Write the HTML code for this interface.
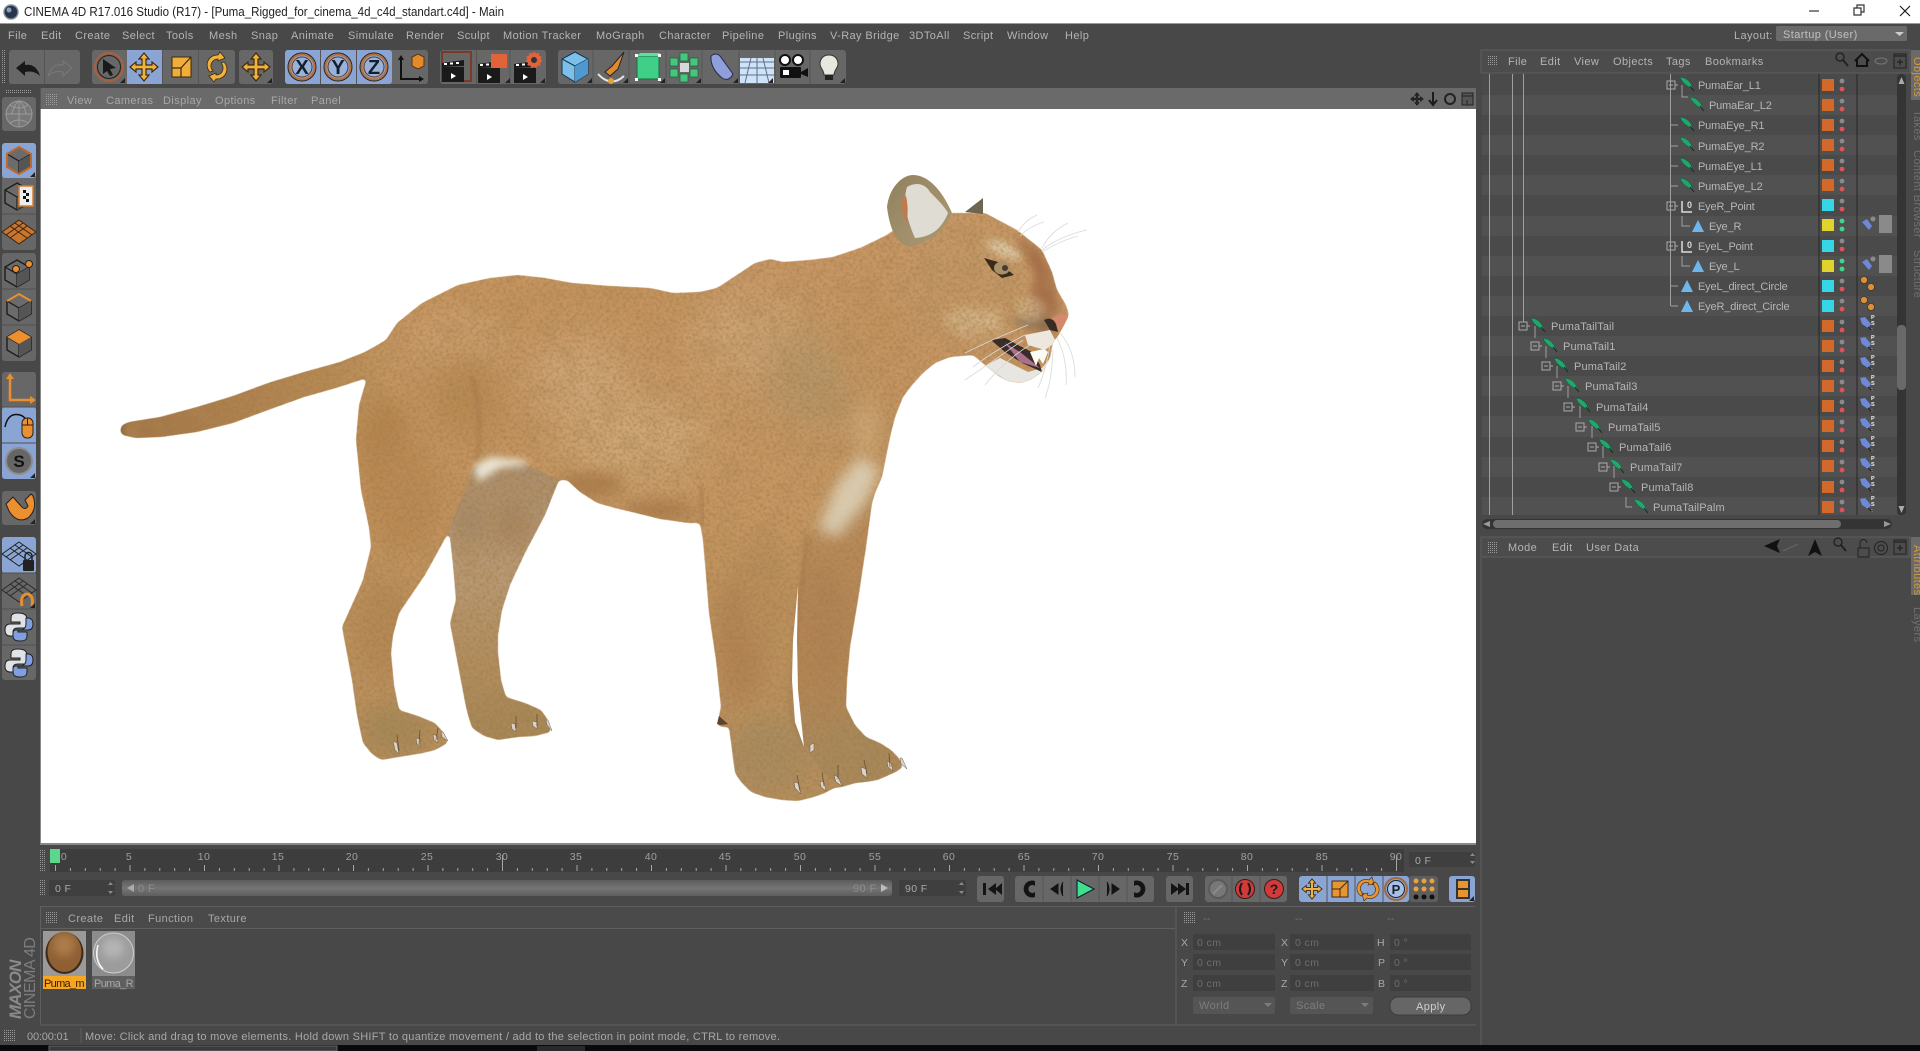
<!DOCTYPE html>
<html lang="en"><head><meta charset="utf-8"><title>CINEMA 4D R17.016 Studio</title>
<style>
html,body{margin:0;padding:0;background:#000;width:1920px;height:1051px;overflow:hidden}
svg{display:block;position:absolute;left:0;top:0}
text{font-family:"Liberation Sans",sans-serif;font-size:11px;letter-spacing:.4px;fill:#b0b0b0}
.m{fill:#b4b4b4}
.h{fill:#a8a8a8}
.t{font-size:11px;letter-spacing:.12px;fill:#b6b6b6}
.t0{font-size:11px;letter-spacing:-.15px;fill:#b6b6b6}
.d{fill:#6d6d6d;font-size:10.5px}
.l{fill:#a9a9a9;font-size:10.5px}
.s{fill:#787878;font-size:10.5px}
.r{fill:#a0a0a0;font-size:10.5px;text-anchor:middle}
.tab{font-size:11px;fill:#707070}
</style></head><body>
<svg width="1920" height="1051" viewBox="0 0 1920 1051" xmlns="http://www.w3.org/2000/svg">
<defs>
<pattern id="gr" width="2" height="2" patternUnits="userSpaceOnUse"><rect width="1" height="1" fill="#9a9a9a"/></pattern>
<linearGradient id="sl" x1="0" y1="0" x2="0" y2="1"><stop offset="0" stop-color="#5c5c5c"/><stop offset=".5" stop-color="#757575"/><stop offset="1" stop-color="#5e5e5e"/></linearGradient>
<linearGradient id="body" x1="0" y1="0" x2="0" y2="1"><stop offset="0" stop-color="#c99868"/><stop offset=".5" stop-color="#c49560"/><stop offset="1" stop-color="#b58e5e"/></linearGradient>
<linearGradient id="farh" x1="0" y1="0" x2="0" y2="1"><stop offset="0" stop-color="#a98d6d"/><stop offset=".4" stop-color="#b89a76"/><stop offset=".7" stop-color="#b28f60"/><stop offset="1" stop-color="#a78757"/></linearGradient>
<linearGradient id="farf" x1="0" y1="0" x2="0" y2="1"><stop offset="0" stop-color="#bb8c5c"/><stop offset=".6" stop-color="#b48655"/><stop offset="1" stop-color="#a6895d"/></linearGradient>
<linearGradient id="tail" x1="0" y1="0" x2="1" y2="0"><stop offset="0" stop-color="#553624"/><stop offset=".06" stop-color="#a47648"/><stop offset=".75" stop-color="#b78a54"/><stop offset="1" stop-color="#c69864"/></linearGradient>
<linearGradient id="earg" x1="0" y1="0" x2="1" y2="1"><stop offset="0" stop-color="#90815f"/><stop offset="1" stop-color="#ad9a72"/></linearGradient>
<filter id="b2" x="-50%" y="-50%" width="200%" height="200%"><feGaussianBlur stdDeviation="2"/></filter>
<filter id="b4" x="-50%" y="-50%" width="200%" height="200%"><feGaussianBlur stdDeviation="4"/></filter>
<filter id="b7" x="-60%" y="-60%" width="220%" height="220%"><feGaussianBlur stdDeviation="7"/></filter>
<filter id="b10" x="-60%" y="-60%" width="220%" height="220%"><feGaussianBlur stdDeviation="11"/></filter>
<filter id="b20" x="-60%" y="-60%" width="220%" height="220%"><feGaussianBlur stdDeviation="20"/></filter>
<filter id="fur" x="0" y="0" width="100%" height="100%"><feTurbulence type="fractalNoise" baseFrequency=".3" numOctaves="3" seed="7"/><feColorMatrix values="0 0 0 0 .34  0 0 0 0 .19  0 0 0 0 .06  2.4 0 0 0 -.95"/></filter>
<filter id="mot" x="0" y="0" width="100%" height="100%"><feTurbulence type="fractalNoise" baseFrequency=".05" numOctaves="3" seed="12"/><feColorMatrix values="0 0 0 0 .45  0 0 0 0 .26  0 0 0 0 .1  3 0 0 0 -1.2"/></filter>
<filter id="goo" filterUnits="userSpaceOnUse" x="0" y="0" width="1920" height="1051"><feGaussianBlur stdDeviation="2.200"/><feComponentTransfer><feFuncA type="linear" slope="5" intercept="-2"/></feComponentTransfer></filter>
<path id="silp" d="M120 430L122 425 129 422 160 417 197 407 233 396 268 383 304 372 340 362 365 352 386 340 397 323 422 303 458 285 490 278 518 275 545 278 572 283 610 286 650 288 673 293 700 292 717 288 740 273 755 263 770 259 783 262 810 260 833 257 860 248 887 235 905 222 950 213 985 213 1017 230 1042 250 1052 272 1057 290 1066 305 1069 315 1063 327 1058 336 1053 342 1050 358 1042 372 1030 380 1020 383 1008 381 1000 377 985 365 973 355 950 357 935 363 923 373 912 385 903 397 895 417 890 437 886 457 882 477 875 493 872 503 866 547 858 600 850 647 847 680 846 707 855 725 866 737 880 743 891 750 899 758 903 767 896 772 889 775 878 780 866 782 855 783 842 787 834 788 825 793 814 797 798 801 782 800 765 797 751 792 741 782 735 773 732 750 729 727 722 727 717 725 719 716 721 707 716 660 709 613 706 575 703 540 700 523 688 523 660 519 636 513 615 508 597 503 580 492 567 480 559 480 545 515 525 553 510 585 502 610 498 635 498 653 501 680 506 697 525 703 541 710 548 720 551 732 535 736 518 737 498 740 484 736 472 728 468 715 466 707 458 665 450 623 456 600 453 565 450 537 448 533 425 575 399 613 393 635 391 653 394 685 399 710 418 716 435 723 444 733 448 743 435 750 423 753 399 757 381 760 372 754 363 743 357 715 352 680 342 627 352 605 363 580 371 547 369 527 361 490 356 440 359 405 367 378 336 388 304 397 268 410 233 423 197 432 161 437 136 438 122 435Z"/>
<mask id="silm" maskUnits="userSpaceOnUse" x="0" y="0" width="1920" height="1051"><use href="#silp" fill="#fff" filter="url(#goo)"/></mask>
<g id="mv"><path d="M0-14l5 6h-3v6h6v-3l6 5-6 5v-3h-6v6h3l-5 6-5-6h3v-6h-6v3l-6-5 6-5v3h6v-6h-3z" fill="#f0b23c" stroke="#3a2a10" stroke-width="1.2"/></g>
<g id="leaf"><path d="M-7-7Q3-6 6 5L2 3Q-5-1-7-7Z" fill="#1fa76c" stroke="#0f5a3c" stroke-width=".5"/><path d="M3 2L7 7" stroke="#222" stroke-width="1"/></g>
<g id="col"><rect x="-4" y="-4" width="8" height="8" fill="none" stroke="#aaa"/><path d="M-2 0H2M4 0H7" stroke="#aaa"/></g>
<g id="cube"><path d="M0-13L12-6V7L0 14-12 7V-6Z" fill="#6b6b6b" stroke="#1c1c1c" stroke-width="1.4"/><path d="M-12-6L0 1 12-6M0 1V14" fill="none" stroke="#1c1c1c" stroke-width="1.2"/><path d="M0 1L12-6V7L0 14Z" fill="#555"/></g>
<g id="tip"><path d="M0 0h-5l5-5z" fill="#222"/></g>
<g id="pin"><path d="M-6-6L-1-7 5 0 2 4-4 0Z" fill="#6f89d8"/><path d="M2 3L6 7" stroke="#222" stroke-width="1"/><text x="5" y="-5" style="font-size:5.5px;font-weight:700;letter-spacing:0;fill:#eee">P</text><text x="5" y="1" style="font-size:5.5px;font-weight:700;letter-spacing:0;fill:#eee">S</text><text x="5" y="7" style="font-size:5.5px;font-weight:700;letter-spacing:0;fill:#ccc">:</text></g>
<g id="py"><path d="M-1-14C-8-14-8-11-8-8V-5H1V-3H-9C-13-3-14 0-14 3-14 7-12 9-9 9H-6V5C-6 2-4 1-1 1H5C7 1 8 0 8-2V-8C8-12 5-14-1-14Z" fill="#dfe3e8" stroke="#222"/><path d="M1 14C8 14 8 11 8 8V5H-1V3H9C13 3 14 0 14-3 14-7 12-9 9-9H7V-3C7 0 5 3 2 3H-3C-5 3-6 4-6 6V8C-6 12-5 14 1 14Z" fill="#7f9fe0" stroke="#222"/></g>
<g id="ring"><circle r="14" fill="#8aa5d4" stroke="#222" stroke-width="1"/><circle r="12.5" fill="none" stroke="#b5703c" stroke-width="2"/><circle r="10" fill="#9ab1da" stroke="#5a3a20"/></g>
<g id="clap"><rect x="-11" y="-3" width="22" height="15" fill="#1a1a1a"/><path d="M-11-7L11-10V-4L-11-3Z" fill="#1a1a1a"/><path d="M-9-6l3 0M-3-6.500l3 0M3-7l3 0" stroke="#fff" stroke-width="2"/><path d="M-2 3L3 6-2 9Z" fill="#fff"/></g>
<g id="pl"><rect x="-6" y="-7" width="12" height="14" fill="none" stroke="#222"/><path d="M-3 1H3M0-2V4M-6-5H6" stroke="#222" stroke-width="1.2"/></g>
<g id="mag"><circle cx="-2" cy="-2" r="4" fill="none" stroke="#222" stroke-width="1.4"/><path d="M1 1L6 7" stroke="#222" stroke-width="2"/></g>
</defs>

<!-- window frame -->
<rect width="1920" height="1051" fill="#484848"/>
<rect width="1920" height="24" fill="#fff"/>
<rect y="23" width="1920" height="1" fill="#9a9a9a"/>
<circle cx="11" cy="12" r="7" fill="#27364e" stroke="#8a8e96" stroke-width="1.4"/><circle cx="9" cy="10" r="2.500" fill="#8da0bd"/>
<text x="24" y="16" textLength="480" lengthAdjust="spacingAndGlyphs" style="font-size:13px;letter-spacing:0;fill:#222">CINEMA 4D R17.016 Studio (R17) - [Puma_Rigged_for_cinema_4d_c4d_standart.c4d] - Main</text>
<path d="M1809 11H1819" stroke="#333" stroke-width="1.2"/><path d="M1854 8h7v7h-7zM1857 8V5h7v7h-3" fill="none" stroke="#333" stroke-width="1.2"/><path d="M1900 6L1910 16M1910 6L1900 16" stroke="#222" stroke-width="1.200"/>

<!-- menu -->
<g class="menu">
<text class="m" x="8" y="39">File</text><text class="m" x="41" y="39">Edit</text><text class="m" x="75" y="39">Create</text><text class="m" x="122" y="39">Select</text><text class="m" x="166" y="39">Tools</text><text class="m" x="209" y="39">Mesh</text><text class="m" x="251" y="39">Snap</text><text class="m" x="291" y="39">Animate</text><text class="m" x="348" y="39">Simulate</text><text class="m" x="406" y="39">Render</text><text class="m" x="457" y="39">Sculpt</text><text class="m" x="503" y="39">Motion Tracker</text><text class="m" x="596" y="39">MoGraph</text><text class="m" x="659" y="39">Character</text><text class="m" x="722" y="39">Pipeline</text><text class="m" x="778" y="39">Plugins</text><text class="m" x="830" y="39">V-Ray Bridge</text><text class="m" x="909" y="39">3DToAll</text><text class="m" x="963" y="39">Script</text><text class="m" x="1007" y="39">Window</text><text class="m" x="1065" y="39">Help</text>
<text class="m" x="1734" y="39">Layout:</text>
</g>
<rect x="1776" y="26" width="131" height="15" rx="2" fill="#6a6a6a"/><text x="1783" y="38" style="fill:#c0c0c0">Startup (User)</text><path d="M1895 32h9l-4.500 4z" fill="#ccc"/>

<!-- toolbar -->
<rect x="1" y="50" width="5" height="34" fill="url(#gr)"/>
<rect x="9" y="50" width="71" height="34" rx="3" fill="#676767"/>
<rect x="92" y="50" width="143" height="34" rx="3" fill="#676767"/><rect x="127" y="50" width="35" height="34" fill="#8aa5d4"/>
<rect x="239" y="50" width="34" height="34" rx="3" fill="#676767"/>
<rect x="285" y="50" width="143" height="34" rx="3" fill="#676767"/><rect x="285" y="50" width="107" height="34" rx="3" fill="#8aa5d4"/>
<rect x="440" y="50" width="106" height="34" rx="3" fill="#676767"/>
<rect x="558" y="50" width="288" height="34" rx="3" fill="#676767"/>
<path d="M44.500 50V84M162.500 50V84M198.500 50V84M320.500 50V84M356.500 50V84M476.500 50V84M510 50V84M593 50V84M629 50V84M666 50V84M702 50V84M739 50V84M775 50V84M810 50V84" stroke="#555"/>
<path d="M16 68L25 61V65Q36 63 40 76 34 70 25 72V76Z" fill="#181818"/>
<path d="M72 68L63 61V65Q52 63 48 76 54 70 63 72V76Z" fill="none" stroke="#797979"/>
<circle cx="109" cy="67" r="14" fill="#676767" stroke="#a8603f" stroke-width="2.200"/><circle cx="109" cy="67" r="11.500" fill="none" stroke="#222"/><path d="M103 59L116 68 110 69 113 75 110 76 107 71 103 74Z" fill="#1a1a1a"/>
<use href="#mv" x="144" y="67"/>
<path d="M172 57H191V77H172Z" fill="#f0ad3a" stroke="#3a2a10"/><path d="M172 68H181V77M181 68L191 57" fill="none" stroke="#3a2a10" stroke-width="1.200"/>
<path d="M210 72A10 10 0 0 1 218 55L220 52 225 58 218 61 218 59A7 7 0 0 0 213 71ZM224 62A10 10 0 0 1 216 79L214 82 209 76 216 73 216 75A7 7 0 0 0 221 63Z" fill="#f0b23c" stroke="#3a2a10" stroke-width=".8"/>
<use href="#mv" x="256" y="67"/>
<use href="#ring" x="302" y="67"/><use href="#ring" x="338" y="67"/><use href="#ring" x="374" y="67"/>
<text x="302" y="74" text-anchor="middle" style="font-size:20px;font-weight:700;fill:#14202e;letter-spacing:0">X</text><text x="338" y="74" text-anchor="middle" style="font-size:20px;font-weight:700;fill:#14202e;letter-spacing:0">Y</text><text x="374" y="74" text-anchor="middle" style="font-size:20px;font-weight:700;fill:#14202e;letter-spacing:0">Z</text>
<path d="M401 58V79H421" fill="none" stroke="#111" stroke-width="2"/><path d="M401 55l-3 5h6zM424 79l-5-3v6z" fill="#111"/><path d="M412 57l6-3 6 3v9l-6 3-6-3z" fill="#e58a2a" stroke="#5a3310"/>
<rect x="442" y="52" width="29" height="29" fill="none" stroke="#7a3a28" stroke-width="2"/><use href="#clap" x="453" y="70"/>
<use href="#clap" x="489" y="71"/><rect x="491" y="54" width="16" height="14" rx="1" fill="#e2633a"/>
<use href="#clap" x="525" y="71"/><circle cx="534" cy="60" r="7" fill="#e2633a" stroke="#e2633a" stroke-dasharray="2 2" stroke-width="2"/><circle cx="534" cy="60" r="3" fill="#333"/>
<path d="M575 52L588 59V74L575 82 562 74V59Z" fill="#7cc0ea" stroke="#143450"/><path d="M562 59L575 66 588 59M575 66V82" fill="none" stroke="#143450"/><path d="M575 66L588 59V74L575 82Z" fill="#4f99ce"/>
<path d="M624 52L612 66 605 72 610 76 618 69Z" fill="#e08a30" stroke="#222"/><path d="M598 74Q611 88 624 76" fill="none" stroke="#e6e6e6" stroke-width="2"/><circle cx="611" cy="81" r="3" fill="#e2a23c"/>
<rect x="637" y="56" width="22" height="23" fill="#3fcf86" stroke="#1f6d47"/><path d="M637 56l3-3h20l-1 3" fill="#5fe09f"/><g fill="#fff"><rect x="635" y="54" width="3" height="3"/><rect x="658" y="54" width="3" height="3"/><rect x="635" y="78" width="3" height="3"/><rect x="658" y="78" width="3" height="3"/></g>
<g fill="#46c67c" stroke="#1f5a3a" stroke-width=".7"><rect x="680" y="53" width="8" height="8"/><rect x="690" y="58" width="8" height="8"/><rect x="670" y="58" width="8" height="8"/><rect x="670" y="69" width="8" height="8"/><rect x="690" y="69" width="8" height="8"/><rect x="680" y="74" width="8" height="8"/></g><rect x="680" y="63" width="9" height="9" fill="#d8d8d8"/>
<path d="M711 56Q716 52 720 56L733 74Q729 82 722 78 710 68 711 56Z" fill="#8f9fdc" stroke="#2a2a4a"/>
<path d="M740 58H774V83H740Z" fill="#cfe3f8"/><path d="M740 62H774M740 68H774M740 75H774M751 58L745 83M763 58L769 83M757 58V83" stroke="#5f6f88" stroke-width="1"/>
<circle cx="785" cy="60" r="5" fill="#fff" stroke="#111" stroke-width="2"/><circle cx="798" cy="60" r="5" fill="#fff" stroke="#111" stroke-width="2"/><rect x="780" y="67" width="21" height="11" rx="1" fill="#111"/><path d="M801 72l7-4v9l-7-3z" fill="#111"/><rect x="783" y="70" width="6" height="5" fill="#fff"/>
<path d="M829 55C835 55 838 59 838 64 838 68 834 70 834 75H824C824 70 820 68 820 64 820 59 823 55 829 55Z" fill="#e8e8e0" stroke="#333"/><rect x="825" y="75" width="8" height="5" fill="#222"/>
<use href="#tip" x="125" y="83"/><use href="#tip" x="272" y="83"/><use href="#tip" x="510" y="83"/><use href="#tip" x="545" y="83"/><use href="#tip" x="592" y="83"/><use href="#tip" x="628" y="83"/><use href="#tip" x="665" y="83"/><use href="#tip" x="701" y="83"/><use href="#tip" x="738" y="83"/><use href="#tip" x="773" y="83"/><use href="#tip" x="845" y="83"/>

<!-- viewport header -->
<rect x="40" y="88" width="1436" height="21" fill="#6a6a6a"/>
<rect x="45" y="93" width="12" height="12" fill="url(#gr)"/>
<text class="h" x="67" y="104">View</text><text class="h" x="106" y="104">Cameras</text><text class="h" x="163" y="104">Display</text><text class="h" x="215" y="104">Options</text><text class="h" x="271" y="104">Filter</text><text class="h" x="311" y="104">Panel</text>
<use href="#mv" transform="translate(1417 99) scale(.45)" style="filter:grayscale(1) brightness(.25)"/><path d="M1433 92V104M1429 100l4 5 4-5" stroke="#1c1c1c" stroke-width="2" fill="none"/><circle cx="1450" cy="99" r="5" fill="none" stroke="#222" stroke-width="2"/><rect x="1462" y="93" width="11" height="12" fill="#555" stroke="#222"/><path d="M1462 96h11M1467 100v5" stroke="#222"/>

<!-- viewport -->
<rect x="40" y="109" width="1436" height="734" fill="#fff"/>
<rect x="40" y="109" width="1" height="734" fill="#8a8a8a"/>
<rect x="40" y="843" width="1436" height="2" fill="#888"/>

<!-- Puma -->
<g mask="url(#silm)">
<rect x="100" y="200" width="980" height="610" fill="url(#body)"/>
<rect x="110" y="320" width="290" height="125" fill="url(#tail)"/>
<polygon points="559,480 545,515 525,553 502,610 498,653 506,697 541,710 551,732 518,737 498,740 472,728 466,707 450,623 456,600 448,533 474,467 520,462" fill="url(#farh)"/>
<ellipse cx="512" cy="525" rx="16" ry="22" fill="#96704c" opacity=".45" filter="url(#b10)"/>
<ellipse cx="470" cy="525" rx="12" ry="22" fill="#8f7658" opacity=".45" filter="url(#b10)"/>
<polygon points="806,535 875,493 872,503 866,547 850,647 846,707 866,737 891,750 903,767 889,775 866,782 842,787 820,770 805,745 797,690 796,620" fill="url(#farf)"/>
<ellipse cx="560" cy="305" rx="150" ry="30" fill="#c5945f" filter="url(#b10)"/>
<ellipse cx="460" cy="345" rx="45" ry="35" fill="#cda070" filter="url(#b10)"/>
<ellipse cx="465" cy="395" rx="35" ry="45" fill="#b78851" filter="url(#b20)"/>
<ellipse cx="385" cy="450" rx="25" ry="55" fill="#b5844e" filter="url(#b10)"/>
<ellipse cx="405" cy="500" rx="35" ry="55" fill="#bb8a54" filter="url(#b10)"/>
<ellipse cx="385" cy="630" rx="30" ry="50" fill="#b68854" filter="url(#b10)"/>
<ellipse cx="395" cy="730" rx="35" ry="25" fill="#a58859" filter="url(#b10)"/>
<ellipse cx="505" cy="722" rx="38" ry="20" fill="#a68759" filter="url(#b10)"/>
<ellipse cx="640" cy="440" rx="80" ry="45" fill="#cda677" filter="url(#b20)"/>
<ellipse cx="580" cy="380" rx="50" ry="40" fill="#cfa678" filter="url(#b20)"/>
<ellipse cx="590" cy="485" rx="34" ry="12" fill="#ac7a4a" filter="url(#b7)"/>
<ellipse cx="660" cy="510" rx="36" ry="9" fill="#ab7c4d" filter="url(#b7)"/>
<ellipse cx="750" cy="340" rx="60" ry="45" fill="#cca374" filter="url(#b20)"/>
<ellipse cx="810" cy="385" rx="40" ry="55" fill="#b6966a" filter="url(#b20)"/>
<ellipse cx="880" cy="330" rx="50" ry="40" fill="#c49461" filter="url(#b20)"/>
<ellipse cx="770" cy="480" rx="70" ry="60" fill="#c69763" filter="url(#b20)"/>
<ellipse cx="740" cy="640" rx="24" ry="65" fill="#b28353" filter="url(#b10)"/>
<ellipse cx="765" cy="590" rx="22" ry="60" fill="#ba8e5c" filter="url(#b10)"/>
<ellipse cx="825" cy="625" rx="18" ry="60" fill="#b08154" filter="url(#b10)"/>
<ellipse cx="770" cy="755" rx="42" ry="36" fill="#a88c60" filter="url(#b10)"/>
<ellipse cx="858" cy="750" rx="30" ry="24" fill="#a5885c" filter="url(#b10)"/>
<!-- creases -->
<path d="M472 375Q484 420 476 462" fill="none" stroke="#9a6c40" stroke-width="4" opacity=".45" filter="url(#b2)"/>
<path d="M700 485Q704 505 702 525" fill="none" stroke="#9a6c40" stroke-width="4" opacity=".5" filter="url(#b2)"/>
<path d="M807 535L795 640 790 712 804 747" fill="none" stroke="#8e6a44" stroke-width="3" opacity=".5" filter="url(#b2)"/>
<!-- head -->
<ellipse cx="965" cy="290" rx="65" ry="60" fill="#c59868" filter="url(#b10)"/>
<ellipse cx="975" cy="322" rx="30" ry="13" fill="#d8bc90" opacity=".8" filter="url(#b7)"/>
<ellipse cx="1005" cy="250" rx="20" ry="7" fill="#dcc6a2" transform="rotate(25 1005 250)" filter="url(#b4)"/>
<polygon points="1015,235 1040,250 1052,272 1060,312 1040,320 1030,300 1035,275" fill="#a86e4c" filter="url(#b4)"/>
<polygon points="1010,318 1048,312 1055,335 1025,328" fill="#8a6a50" filter="url(#b4)"/>
<ellipse cx="1030" cy="310" rx="15" ry="14" fill="#d8c4a0" opacity=".5" filter="url(#b4)"/>
</g>
<rect x="100" y="200" width="980" height="610" filter="url(#mot)" mask="url(#silm)" opacity=".3"/>
<rect x="100" y="200" width="980" height="610" filter="url(#fur)" mask="url(#silm)" opacity=".5"/>
<g mask="url(#silm)">
<polygon points="818,530 838,537 866,503 880,470 860,455 836,485" fill="#ddd3bb" filter="url(#b7)" opacity=".85"/>
<ellipse cx="866" cy="430" rx="12" ry="28" fill="#d3b68c" opacity=".55" filter="url(#b10)"/>
<polygon points="474,466 490,457 525,460 528,465 500,468 478,482" fill="#ece8d8" filter="url(#b4)" opacity=".95"/>
<polygon points="1000,358 1028,372 1042,368 1050,358 1036,385 1010,383 985,366" fill="#e8e6e0"/>
<polygon points="1025,335 1050,330 1056,342 1045,350 1028,345" fill="#ece8e0"/>
<path d="M991 340L1005 338 1018 345 1032 352 1040 365 1042 372 1022 363 1005 352Z" fill="#3a2c28"/>
<path d="M1005 343L1020 352 1040 368 1020 362Z" fill="#a8708a"/>
<path d="M1030 352l6 14 3-8 4 6 5-12-4-3z" fill="#fbfbf6"/>
<path d="M1058 315Q1068 312 1068 318 1066 326 1058 330 1050 325 1049 320Z" fill="#d4886c"/>
<path d="M1044 320Q1052 316 1056 324L1058 332 1050 330Z" fill="#3a2a24"/>
<path d="M984 258L998 262 1014 275 1002 278 992 270Z" fill="#3a2a1c"/>
<ellipse cx="1002" cy="268" rx="8" ry="6.500" fill="#a9916a"/><circle cx="1005" cy="268" r="3" fill="#4a3c2a"/>
</g>
<path d="M798 585L797 640 798 690 804 747 795 722 792 680 793 640Z" fill="#fff"/>
<path d="M728 724l-8 1-3-1 2-8z" fill="#5a4430"/>
<!-- ear -->
<path d="M965 212L983 198 983 214Z" fill="#6e6450"/>
<path d="M887 207C889 188 902 175 913 175 928 175 942 190 952 213 946 230 930 242 910 247 898 245 890 232 887 207Z" fill="url(#earg)"/>
<path d="M907 187C915 182 925 183 930 192 938 200 944 206 948 213 942 228 932 237 915 238 908 222 902 203 907 187Z" fill="#dfdcd4"/>
<path d="M903 197C900 205 902 215 907 222 908 212 908 204 906 196Z" fill="#c07a50"/>
<!-- claws -->
<g fill="#d8d2c8" stroke="#5a4630" stroke-width=".4"><path d="M393 741l4 2 2 11-4-4z"/><path d="M416 738l4 1 0 8-3-3z"/><path d="M433 734l4 2 1 7-4-3z"/><path d="M441 732l2 0 5 9-6-4z"/><path d="M511 723l4 1 1 8-4-3z"/><path d="M532 721l5 1 0 7-4-3z"/><path d="M546 720l2 0 4 11-5-6z"/><path d="M794 782l4 1 3 11-6-6z"/><path d="M820 781l4 1 2 9-5-4z"/><path d="M834 775l4 2 4 9-6-4z"/><path d="M861 767l5 2 1 9-5-4z"/><path d="M887 761l4 2 2 8-5-4z"/><path d="M900 758l2 0 5 11-6-5z"/><path d="M810 745l4-2 0 7-4 3z"/></g>
<g stroke="#5a4026" stroke-width=".9" fill="none" opacity=".7"><path d="M397 735l2 16M420 730l-1 15M438 728l-2 12M516 716l0 12M537 714l0 12M797 775l3 16M822 772l2 14M838 765l0 14M864 760l3 14M889 753l1 14"/></g>
<!-- whiskers -->
<g stroke="#d8d8d8" stroke-width=".8" fill="none"><path d="M1018 232Q1025 220 1037 215M1020 236Q1030 226 1044 222M1042 248Q1050 232 1068 223M1042 250Q1060 236 1087 230M1042 252Q1062 240 1078 236"/><path d="M1028 325Q995 338 965 353M1025 335Q995 350 973 367M1023 340Q995 360 965 380M1030 345Q1005 360 985 385M1060 333Q1075 350 1075 377M1057 338Q1068 360 1066 385M1053 350Q1052 380 1045 398M1050 345Q1046 370 1038 388"/></g>

<!-- timeline -->
<rect x="40" y="845" width="1436" height="181" fill="#484848"/>
<rect x="50" y="849" width="1354" height="23" fill="#3d3d3d"/>
<rect x="40" y="849" width="6" height="23" fill="url(#gr)"/><rect x="40" y="880" width="6" height="16" fill="url(#gr)"/>
<path stroke="#a5a5a5" d="M55.500 865V871M70.400 868V871M85.300 868V871M100.200 868V871M115.100 868V871M130 865V871M144.900 868V871M159.800 868V871M174.700 868V871M189.600 868V871M204.500 865V871M219.400 868V871M234.300 868V871M249.200 868V871M264.100 868V871M279 865V871M293.900 868V871M308.800 868V871M323.700 868V871M338.600 868V871M353.500 865V871M368.400 868V871M383.300 868V871M398.200 868V871M413.100 868V871M428 865V871M442.900 868V871M457.800 868V871M472.700 868V871M487.600 868V871M502.500 855V871M517.400 868V871M532.300 868V871M547.200 868V871M562.100 868V871M577 865V871M591.900 868V871M606.800 868V871M621.700 868V871M636.600 868V871M651.500 865V871M666.400 868V871M681.300 868V871M696.200 868V871M711.100 868V871M726 865V871M740.900 868V871M755.800 868V871M770.700 868V871M785.600 868V871M800.500 865V871M815.400 868V871M830.300 868V871M845.200 868V871M860.100 868V871M875 865V871M889.900 868V871M904.800 868V871M919.700 868V871M934.600 868V871M949.500 865V871M964.400 868V871M979.300 868V871M994.200 868V871M1009.100 868V871M1024 865V871M1038.900 868V871M1053.800 868V871M1068.700 868V871M1083.600 868V871M1098.500 865V871M1113.400 868V871M1128.300 868V871M1143.200 868V871M1158.100 868V871M1173 865V871M1187.900 868V871M1202.800 868V871M1217.700 868V871M1232.600 868V871M1247.500 865V871M1262.400 868V871M1277.300 868V871M1292.200 868V871M1307.100 868V871M1322 865V871M1336.900 868V871M1351.800 868V871M1366.700 868V871M1381.600 868V871M1396.500 855V871"/>
<rect x="50" y="849" width="10" height="14" fill="#5cd68a"/>
<text class="r" x="64" y="860">0</text><text class="r" x="129" y="860">5</text><text class="r" x="204" y="860">10</text><text class="r" x="278" y="860">15</text><text class="r" x="352" y="860">20</text><text class="r" x="427" y="860">25</text><text class="r" x="502" y="860">30</text><text class="r" x="576" y="860">35</text><text class="r" x="651" y="860">40</text><text class="r" x="725" y="860">45</text><text class="r" x="800" y="860">50</text><text class="r" x="875" y="860">55</text><text class="r" x="949" y="860">60</text><text class="r" x="1024" y="860">65</text><text class="r" x="1098" y="860">70</text><text class="r" x="1173" y="860">75</text><text class="r" x="1247" y="860">80</text><text class="r" x="1322" y="860">85</text><text class="r" x="1396" y="860">90</text>
<rect x="1409" y="852" width="66" height="15" fill="#3f3f3f"/><text class="l" x="1415" y="864">0 F</text><path d="M1470 856l2.500-3 2.500 3zM1470 861l2.500 3 2.500-3z" fill="#8a8a8a"/>
<rect x="49" y="880" width="66" height="16" rx="1" fill="#3f3f3f"/><text class="l" x="55" y="892">0 F</text><path d="M108 885l2.500-3 2.500 3zM108 891l2.500 3 2.500-3z" fill="#8a8a8a"/>
<rect x="122" y="880" width="770" height="16" rx="3" fill="url(#sl)"/><path d="M134 884v8l-7-4z" fill="#aaa"/><text x="138" y="892" style="fill:#8d8d8d">0 F</text><text x="853" y="892" style="fill:#8d8d8d">90 F</text><path d="M881 884v8l7-4z" fill="#bbb"/>
<rect x="899" y="880" width="67" height="16" rx="1" fill="#3f3f3f"/><text class="l" x="905" y="892">90 F</text><path d="M959 885l2.500-3 2.500 3zM959 891l2.500 3 2.500-3z" fill="#8a8a8a"/>
<rect x="977" y="876" width="27" height="26" rx="3" fill="#676767"/><rect x="1015" y="876" width="139" height="26" rx="3" fill="#676767"/><rect x="1166" y="876" width="27" height="26" rx="3" fill="#676767"/><rect x="1205" y="876" width="82" height="26" rx="3" fill="#676767"/><rect x="1299" y="876" width="110" height="26" rx="3" fill="#8aa5d4"/><rect x="1409" y="876" width="29" height="26" rx="3" fill="#5e5e5e"/><rect x="1449" y="876" width="26" height="26" rx="3" fill="#8aa5d4"/>
<path d="M1043 876V902M1071 876V902M1099 876V902M1127 876V902M1232 876V902M1260 876V902M1327 876V902M1355 876V902M1383 876V902" stroke="#555"/>
<path d="M983 883h3v12h-3zM996 883v12l-8-6zM1002 883v12l-7-6z" fill="#141414"/>
<path d="M1035 881A8.500 8.500 0 1 0 1035 897V892A4 4 0 1 1 1035 886Z" fill="#141414"/>
<path d="M1058 884v10l-7-5zM1063 882Q1059 889 1063 896" fill="#141414" stroke="#141414"/>
<path d="M1077 880L1094 889 1077 898Z" fill="#3ee08c" stroke="#123" stroke-width="1.200"/>
<path d="M1112 884v10l7-5zM1107 882Q1111 889 1107 896" fill="#141414" stroke="#141414"/>
<path d="M1134 881A8.500 8.500 0 1 1 1134 897V892A4 4 0 1 0 1134 886Z" fill="#141414"/>
<path d="M1171 883v12l8-6zM1178 883v12l8-6zM1186 883h3v12h-3z" fill="#141414"/>
<circle cx="1218" cy="889" r="9" fill="#777" stroke="#5a5a5a" stroke-width="2"/><path d="M1213 894L1222 885" stroke="#8a8a8a" stroke-width="2"/>
<circle cx="1245" cy="889" r="9.500" fill="#d23a3a" stroke="#3a1a1a"/><path d="M1242 883Q1238 889 1242 895M1248 883Q1252 889 1248 895" fill="none" stroke="#1a1a1a" stroke-width="2"/>
<circle cx="1274" cy="889" r="9.500" fill="#d23a3a" stroke="#3a1a1a"/><text x="1274" y="894" text-anchor="middle" style="font-size:14px;font-weight:700;fill:#1a1a1a;letter-spacing:0">?</text>
<use href="#mv" transform="translate(1312 889) scale(.72)"/>
<path d="M1332 881h16v16h-16z" fill="#e8952f" stroke="#3a2a10"/><path d="M1332 889h8v8M1340 889l8-8" fill="none" stroke="#3a2a10"/>
<path d="M1361 896A9 9 0 0 1 1369 880L1372 877 1374 884 1368 885 1369 883A6 6 0 0 0 1364 894ZM1375 882A9 9 0 0 1 1367 898L1364 901 1362 894 1368 893 1367 895A6 6 0 0 0 1372 884Z" fill="#e8952f" stroke="#3a2a10" stroke-width=".6"/>
<circle cx="1396" cy="889" r="11" fill="#8aa5d4" stroke="#a5683a" stroke-width="2"/><circle cx="1396" cy="889" r="8.500" fill="#a8c0e6" stroke="#222"/><text x="1396" y="894" text-anchor="middle" style="font-size:13px;font-weight:700;fill:#14202e;letter-spacing:0">P</text>
<g fill="#e8a040"><circle cx="1416" cy="881" r="2.500"/><circle cx="1424" cy="881" r="2.500"/><circle cx="1432" cy="881" r="2.500"/><circle cx="1416" cy="889" r="2.500"/><circle cx="1424" cy="889" r="2.500"/><circle cx="1432" cy="889" r="2.500"/></g><g fill="#111"><circle cx="1416" cy="897" r="2.500"/><circle cx="1424" cy="897" r="2.500"/><circle cx="1432" cy="897" r="2.500"/></g>
<rect x="1456" y="879" width="14" height="20" fill="#333"/><rect x="1458" y="881" width="10" height="7" fill="#e8952f"/><rect x="1458" y="890" width="10" height="7" fill="#e8952f"/><use href="#tip" x="1474" y="901"/>

<!-- materials panel -->
<path d="M40 906.500H1475" stroke="#5f5f5f"/><rect x="40" y="907" width="1135" height="21" fill="#4a4a4a"/><path d="M40 928.500H1175M1176 907V1024M40 1025H1476M40.500 907V1025" stroke="#5f5f5f"/>
<rect x="46" y="912" width="12" height="12" fill="url(#gr)"/>
<text class="h" x="68" y="922">Create</text><text class="h" x="114" y="922">Edit</text><text class="h" x="148" y="922">Function</text><text class="h" x="208" y="922">Texture</text>
<rect x="43" y="931" width="43" height="45" fill="#9a9a9a"/><ellipse cx="64.500" cy="953" rx="19" ry="21" fill="#3e2818"/><ellipse cx="64.500" cy="952" rx="17" ry="20" fill="#8e6034"/><ellipse cx="64" cy="945" rx="11" ry="11" fill="#ad7c4a" filter="url(#b4)"/>
<rect x="43" y="976" width="43" height="13" fill="#f5a623"/><text x="44" y="987" textLength="41" style="fill:#3a1a00">Puma_m</text>
<rect x="92" y="931" width="43" height="58" fill="#5f5f5f"/><rect x="92" y="931" width="43" height="45" fill="#8c8c8c"/><circle cx="113.500" cy="953" r="20" fill="#9c9c9c" stroke="#cfcfcf"/><path d="M98 945Q94 960 103 969" fill="none" stroke="#fff" stroke-width="1.500"/><ellipse cx="113" cy="948" rx="11" ry="10" fill="#b4b4b4" filter="url(#b4)"/>
<text x="94" y="987" textLength="40" style="fill:#a8a8a8">Puma_R</text>
<text transform="translate(21 1019) rotate(-90)" style="font-size:17px;font-weight:700;font-style:italic;fill:#8a8a8a;letter-spacing:-1px">MAXON</text>
<text transform="translate(35 1019) rotate(-90)" textLength="82" style="font-size:16px;fill:#7d7d7d;letter-spacing:0">CINEMA 4D</text>

<!-- coordinates -->
<rect x="1184" y="912" width="12" height="12" fill="url(#gr)"/>
<text class="s" x="1203" y="922">--</text><text class="s" x="1295" y="922">--</text><text class="s" x="1387" y="922">--</text>
<g fill="#3f3f3f"><rect x="1193" y="934" width="82" height="16"/><rect x="1290" y="934" width="84" height="16"/><rect x="1390" y="934" width="81" height="16"/><rect x="1193" y="954" width="82" height="16"/><rect x="1290" y="954" width="84" height="16"/><rect x="1390" y="954" width="81" height="16"/><rect x="1193" y="975" width="82" height="16"/><rect x="1290" y="975" width="84" height="16"/><rect x="1390" y="975" width="81" height="16"/></g>
<g class="lb"><text class="l" x="1181" y="946">X</text><text class="l" x="1281" y="946">X</text><text class="l" x="1377" y="946">H</text><text class="l" x="1181" y="966">Y</text><text class="l" x="1281" y="966">Y</text><text class="l" x="1378" y="966">P</text><text class="l" x="1181" y="987">Z</text><text class="l" x="1281" y="987">Z</text><text class="l" x="1378" y="987">B</text></g>
<text class="d" x="1197" y="946">0 cm</text><text class="d" x="1295" y="946">0 cm</text><text class="d" x="1394" y="946">0 °</text><text class="d" x="1197" y="966">0 cm</text><text class="d" x="1295" y="966">0 cm</text><text class="d" x="1394" y="966">0 °</text><text class="d" x="1197" y="987">0 cm</text><text class="d" x="1295" y="987">0 cm</text><text class="d" x="1394" y="987">0 °</text>
<rect x="1193" y="997" width="82" height="17" rx="2" fill="#555"/><text x="1199" y="1009" style="fill:#7d7d7d">World</text><path d="M1264 1003h8l-4 4z" fill="#7d7d7d"/>
<rect x="1290" y="997" width="83" height="17" rx="2" fill="#555"/><text x="1296" y="1009" style="fill:#7d7d7d">Scale</text><path d="M1361 1003h8l-4 4z" fill="#7d7d7d"/>
<rect x="1390" y="997" width="81" height="18" rx="8" fill="#666" stroke="#3c3c3c"/><text x="1416" y="1010" style="fill:#cfcfcf">Apply</text>

<!-- status -->
<rect y="1026" width="1476" height="19" fill="#484848"/>
<rect x="3" y="1030" width="12" height="11" fill="url(#gr)"/>
<text x="27" y="1040" textLength="42" style="fill:#a5a5a5">00:00:01</text><path d="M81 1028V1043" stroke="#5e5e5e"/>
<text x="85" y="1040" textLength="695" style="fill:#a8a8a8;letter-spacing:0">Move: Click and drag to move elements. Hold down SHIFT to quantize movement / add to the selection in point mode, CTRL to remove.</text>

<!-- left toolbar -->
<rect x="5" y="90" width="27" height="4" fill="url(#gr)"/>
<g fill="#676767"><rect x="2" y="97" width="34" height="34" rx="3"/><rect x="2" y="143" width="34" height="107" rx="3"/><rect x="2" y="253" width="34" height="108" rx="3"/><rect x="2" y="372" width="34" height="107" rx="3"/><rect x="2" y="491" width="34" height="34" rx="3"/><rect x="2" y="537" width="34" height="143" rx="3"/></g>
<g fill="#8aa5d4"><rect x="2" y="143" width="34" height="35" rx="3"/><rect x="2" y="407" width="34" height="72" rx="3"/><rect x="2" y="537" width="34" height="36" rx="3"/></g>
<path d="M2 214H36M2 289H36M2 325H36M2 407H36M2 443H36M2 573H36M2 609H36M2 645H36" stroke="#505050"/>
<g fill="none" stroke="#9a9a9a"><circle cx="19" cy="114" r="13" fill="#787878"/><path d="M6 114H32M19 101V127M10 105Q19 111 28 105M10 123Q19 117 28 123M12 114Q14 104 19 101Q24 104 26 114"/></g>
<use href="#cube" x="19" y="160"/><path d="M19 147L31 154V167L19 174 7 167V154Z" fill="none" stroke="#c0682c" stroke-width="2"/><use href="#tip" x="35" y="177"/>
<use href="#cube" x="17" y="196"/><rect x="19" y="186" width="14" height="20" fill="#eee" stroke="#d97f2f" stroke-width="1.500"/><path d="M23 190h3v3h-3zM26 193h3v3h-3zM23 196h3v3h-3zM26 199h3v3h-3z" fill="#111"/>
<path d="M19 220L36 232 19 244 2 232Z" fill="#c8752e" stroke="#3a2410"/><path d="M10 226L27 238M15 223L32 235M27 226L10 238M23 223L6 235" stroke="#3a2410"/>
<use href="#cube" x="17" y="273"/><circle cx="16" cy="269" r="3.500" fill="#e8902f" stroke="#222"/><circle cx="29" cy="264" r="3.500" fill="#e8902f" stroke="#222"/>
<use href="#cube" x="19" y="307"/><path d="M7 301L19 294 31 301" fill="none" stroke="#e8902f" stroke-width="2"/>
<use href="#cube" x="19" y="343"/><path d="M19 330L31 337 19 344 7 337Z" fill="#ec8f2f"/>
<path d="M10 377V400H33" fill="none" stroke="#e8902f" stroke-width="2.500"/><path d="M10 373l-4 6h8zM36 400l-6-4v8z" fill="#e8902f"/>
<path d="M5 427Q8 412 20 415 24 416 26 420" fill="none" stroke="#111" stroke-width="1.500"/><rect x="22" y="418" width="11" height="20" rx="5" fill="#ec8f2f" stroke="#222"/><path d="M22 425H33M27.500 418V425" stroke="#222"/>
<circle cx="19" cy="461" r="13" fill="#666" stroke="#8d8d8d" stroke-width="2"/><text x="19" y="467" text-anchor="middle" style="font-size:17px;font-weight:700;fill:#111;letter-spacing:0">S</text><use href="#tip" x="35" y="478"/>
<path d="M6 503L13 496 21 505Q25 510 28 505L25 499 31 493 33 495Q38 508 28 517 17 523 9 510Z" fill="#ec8f2f" stroke="#222" transform="translate(0 1)"/><use href="#tip" x="35" y="524"/>
<g fill="none" stroke="#222"><path d="M19 542L36 554 19 566 2 554Z"/><path d="M10 548L27 560M15 545L32 557M27 548L10 560M23 545L6 557"/></g><rect x="23" y="560" width="11" height="11" rx="1" fill="#222"/><path d="M25 560V556A3.500 3.500 0 0 1 32 556V560" fill="none" stroke="#222" stroke-width="1.500"/>
<g fill="none" stroke="#2a2a2a" transform="translate(0 36)"><path d="M19 542L36 554 19 566 2 554Z"/><path d="M10 548L27 560M15 545L32 557M27 548L10 560M23 545L6 557"/></g><path d="M22 606Q20 595 27 594 34 595 32 606" fill="none" stroke="#e8902f" stroke-width="3"/><use href="#tip" x="35" y="608"/>
<use href="#py" x="19" y="627"/><use href="#py" x="19" y="663"/>
<rect x="40" y="88" width="1" height="21" fill="#555"/>

<!-- right side: object manager -->
<rect x="1476" y="48" width="444" height="1003" fill="#484848"/>
<rect x="1481" y="50" width="429" height="23" fill="#4c4c4c" stroke="#5e5e5e"/>
<rect x="1487" y="55" width="11" height="11" fill="url(#gr)"/>
<text class="m" x="1508" y="65">File</text><text class="m" x="1540" y="65">Edit</text><text class="m" x="1574" y="65">View</text><text class="m" x="1613" y="65">Objects</text><text class="m" x="1666" y="65">Tags</text><text class="m" x="1705" y="65">Bookmarks</text>
<use href="#mag" x="1842" y="59"/><path d="M1855 61L1862 54 1869 61M1857 60V66H1867V60" fill="none" stroke="#111" stroke-width="2"/><ellipse cx="1881" cy="61" rx="6" ry="3" fill="none" stroke="#777"/><use href="#pl" x="1900" y="61"/>
<g><rect x="1482" y="74" width="415" height="441" fill="#4a4a4a"/>
<g fill="#515151"><rect x="1482" y="95" width="415" height="20"/><rect x="1482" y="135" width="415" height="20"/><rect x="1482" y="175" width="415" height="20"/><rect x="1482" y="216" width="415" height="20"/><rect x="1482" y="256" width="415" height="20"/><rect x="1482" y="296" width="415" height="20"/><rect x="1482" y="336" width="415" height="20"/><rect x="1482" y="376" width="415" height="20"/><rect x="1482" y="416" width="415" height="21"/><rect x="1482" y="457" width="415" height="20"/><rect x="1482" y="497" width="415" height="18"/></g></g>
<path d="M1819 74V515M1857 74V515" stroke="#2e2e2e" stroke-width="1.200"/>
<path d="M1489.500 74V515M1512.500 74V515M1523.500 74V322M1670.500 74V306" stroke="#9f9f9f"/>
<!-- tree -->
<g stroke="#9f9f9f" fill="none"><path d="M1682 85V97H1688"/><path d="M1671 125H1678M1671 146H1678M1671 166H1678M1671 186H1678M1671 286H1678M1671 306H1678"/><path d="M1682 216V226H1690M1682 256V266H1690"/><path d="M1626 497V507H1632"/><path d="M1535 338V326M1546 358V346M1557 378V366M1568 398V386M1580 418V406M1592 438V426M1603 458V446M1614 478V466"/></g>
<use href="#col" x="1671" y="85"/><use href="#col" x="1671" y="206"/><use href="#col" x="1671" y="246"/><use href="#col" x="1523" y="326"/><use href="#col" x="1535" y="346"/><use href="#col" x="1546" y="366"/><use href="#col" x="1557" y="386"/><use href="#col" x="1568" y="407"/><use href="#col" x="1580" y="427"/><use href="#col" x="1592" y="447"/><use href="#col" x="1603" y="467"/><use href="#col" x="1614" y="487"/>
<use href="#leaf" x="1687" y="84"/><use href="#leaf" x="1697" y="104"/><use href="#leaf" x="1687" y="124"/><use href="#leaf" x="1687" y="144"/><use href="#leaf" x="1687" y="165"/><use href="#leaf" x="1687" y="185"/><use href="#leaf" x="1538" y="325"/><use href="#leaf" x="1550" y="345"/><use href="#leaf" x="1561" y="365"/><use href="#leaf" x="1572" y="385"/><use href="#leaf" x="1583" y="405"/><use href="#leaf" x="1595" y="426"/><use href="#leaf" x="1606" y="446"/><use href="#leaf" x="1617" y="466"/><use href="#leaf" x="1628" y="486"/><use href="#leaf" x="1641" y="506"/>
<g><path d="M1682 201V212H1692" fill="none" stroke="#ddd" stroke-width="1.500"/><text x="1687" y="208" style="font-size:9px;font-weight:700;fill:#ddd;letter-spacing:0">0</text><path d="M1682 241V252H1692" fill="none" stroke="#ddd" stroke-width="1.500"/><text x="1687" y="248" style="font-size:9px;font-weight:700;fill:#ddd;letter-spacing:0">0</text></g>
<g fill="#6fb6ec"><path d="M1698 220L1704 232H1692Z"/><path d="M1698 260L1704 272H1692Z"/><path d="M1687 280L1693 292H1681Z"/><path d="M1687 300L1693 312H1681Z"/></g>
<text class="t0" x="1698" y="89">PumaEar_L1</text><text class="t0" x="1709" y="109">PumaEar_L2</text><text class="t0" x="1698" y="129">PumaEye_R1</text><text class="t0" x="1698" y="150">PumaEye_R2</text><text class="t0" x="1698" y="170">PumaEye_L1</text><text class="t0" x="1698" y="190">PumaEye_L2</text><text class="t0" x="1698" y="210">EyeR_Point</text><text class="t0" x="1709" y="230">Eye_R</text><text class="t0" x="1698" y="250">EyeL_Point</text><text class="t0" x="1709" y="270">Eye_L</text><text class="t0" x="1698" y="290">EyeL_direct_Circle</text><text class="t0" x="1698" y="310">EyeR_direct_Circle</text><text class="t" x="1551" y="330">PumaTailTail</text><text class="t" x="1563" y="350">PumaTail1</text><text class="t" x="1574" y="370">PumaTail2</text><text class="t" x="1585" y="390">PumaTail3</text><text class="t" x="1596" y="411">PumaTail4</text><text class="t" x="1608" y="431">PumaTail5</text><text class="t" x="1619" y="451">PumaTail6</text><text class="t" x="1630" y="471">PumaTail7</text><text class="t" x="1641" y="491">PumaTail8</text><text class="t" x="1653" y="511">PumaTailPalm</text>
<!-- swatches -->
<g fill="#d2682a"><rect x="1822" y="79" width="12" height="12"/><rect x="1822" y="99" width="12" height="12"/><rect x="1822" y="119" width="12" height="12"/><rect x="1822" y="139" width="12" height="12"/><rect x="1822" y="159" width="12" height="12"/><rect x="1822" y="179" width="12" height="12"/><rect x="1822" y="320" width="12" height="12"/><rect x="1822" y="340" width="12" height="12"/><rect x="1822" y="360" width="12" height="12"/><rect x="1822" y="380" width="12" height="12"/><rect x="1822" y="400" width="12" height="12"/><rect x="1822" y="420" width="12" height="12"/><rect x="1822" y="440" width="12" height="12"/><rect x="1822" y="460" width="12" height="12"/><rect x="1822" y="481" width="12" height="12"/><rect x="1822" y="501" width="12" height="12"/></g>
<g fill="#35d6e6"><rect x="1822" y="199" width="12" height="12"/><rect x="1822" y="240" width="12" height="12"/><rect x="1822" y="280" width="12" height="12"/><rect x="1822" y="300" width="12" height="12"/></g>
<g fill="#e0d42a"><rect x="1822" y="219" width="12" height="12"/><rect x="1822" y="260" width="12" height="12"/></g>
<!-- dots -->
<g fill="#8a8a8a"><circle cx="1842" cy="81" r="2.400"/><circle cx="1842" cy="101" r="2.400"/><circle cx="1842" cy="121" r="2.400"/><circle cx="1842" cy="141" r="2.400"/><circle cx="1842" cy="161" r="2.400"/><circle cx="1842" cy="181" r="2.400"/><circle cx="1842" cy="201" r="2.400"/><circle cx="1842" cy="241" r="2.400"/><circle cx="1842" cy="281" r="2.400"/><circle cx="1842" cy="301" r="2.400"/><circle cx="1842" cy="322" r="2.400"/><circle cx="1842" cy="342" r="2.400"/><circle cx="1842" cy="362" r="2.400"/><circle cx="1842" cy="382" r="2.400"/><circle cx="1842" cy="402" r="2.400"/><circle cx="1842" cy="422" r="2.400"/><circle cx="1842" cy="442" r="2.400"/><circle cx="1842" cy="462" r="2.400"/><circle cx="1842" cy="482" r="2.400"/><circle cx="1842" cy="502" r="2.400"/></g>
<g fill="#e0525a"><circle cx="1842" cy="89" r="2.400"/><circle cx="1842" cy="109" r="2.400"/><circle cx="1842" cy="129" r="2.400"/><circle cx="1842" cy="149" r="2.400"/><circle cx="1842" cy="169" r="2.400"/><circle cx="1842" cy="189" r="2.400"/><circle cx="1842" cy="209" r="2.400"/><circle cx="1842" cy="249" r="2.400"/><circle cx="1842" cy="289" r="2.400"/><circle cx="1842" cy="309" r="2.400"/><circle cx="1842" cy="330" r="2.400"/><circle cx="1842" cy="350" r="2.400"/><circle cx="1842" cy="370" r="2.400"/><circle cx="1842" cy="390" r="2.400"/><circle cx="1842" cy="410" r="2.400"/><circle cx="1842" cy="430" r="2.400"/><circle cx="1842" cy="450" r="2.400"/><circle cx="1842" cy="470" r="2.400"/><circle cx="1842" cy="490" r="2.400"/><circle cx="1842" cy="510" r="2.400"/></g>
<g fill="#3fd68a"><circle cx="1842" cy="221" r="2.400"/><circle cx="1842" cy="229" r="2.400"/><circle cx="1842" cy="261" r="2.400"/><circle cx="1842" cy="269" r="2.400"/></g>
<!-- tags -->
<path d="M1862 222L1867 219 1872 226 1869 230ZM1862 262L1867 259 1872 266 1869 270Z" fill="#6f89d8"/><circle cx="1873" cy="219" r="2.500" fill="#8a8a8a"/><circle cx="1873" cy="259" r="2.500" fill="#8a8a8a"/>
<rect x="1879" y="215" width="13" height="18" fill="#8a8a8a"/><rect x="1879" y="255" width="13" height="18" fill="#8a8a8a"/>
<g fill="#d9903a" stroke="#3a2410" stroke-width=".6"><circle cx="1864" cy="280" r="3.500"/><circle cx="1871" cy="287" r="3.500"/><circle cx="1864" cy="300" r="3.500"/><circle cx="1871" cy="307" r="3.500"/></g>
<use href="#pin" x="1866" y="324"/><use href="#pin" x="1866" y="344"/><use href="#pin" x="1866" y="364"/><use href="#pin" x="1866" y="384"/><use href="#pin" x="1866" y="405"/><use href="#pin" x="1866" y="425"/><use href="#pin" x="1866" y="445"/><use href="#pin" x="1866" y="465"/><use href="#pin" x="1866" y="485"/><use href="#pin" x="1866" y="505"/>
<!-- scrollbars -->
<rect x="1897" y="74" width="9" height="441" rx="4" fill="#343434"/><rect x="1897" y="325" width="9" height="65" rx="4" fill="#696969"/><path d="M1901.500 77l3 7h-6zM1901.500 513l3-7h-6z" fill="#aaa"/>
<rect x="1482" y="519" width="410" height="10" rx="5" fill="#343434"/><rect x="1493" y="520" width="348" height="8" rx="4" fill="#6e6e6e"/><path d="M1483 524l7-3v6zM1891 524l-7-3v6z" fill="#9a9a9a"/>

<!-- side tabs -->
<rect x="1911" y="50" width="9" height="50" fill="#6a6a6a"/><rect x="1911" y="537" width="9" height="58" fill="#6a6a6a"/>
<text transform="translate(1914 57) rotate(90)" class="tab" style="fill:#d49a3a">Objects</text>
<text transform="translate(1914 110) rotate(90)" class="tab">Takes</text>
<text transform="translate(1914 150) rotate(90)" class="tab">Content Browser</text>
<text transform="translate(1914 250) rotate(90)" class="tab">Structure</text>
<text transform="translate(1914 545) rotate(90)" class="tab" style="fill:#d49a3a">Attributes</text>
<text transform="translate(1914 607) rotate(90)" class="tab">Layers</text>

<!-- attributes -->
<rect x="1481" y="537" width="429" height="20" fill="#4c4c4c" stroke="#5e5e5e"/>
<rect x="1481" y="558" width="429" height="470" fill="#484848"/>
<path d="M1481 558V1045" stroke="#5e5e5e"/>
<rect x="1487" y="541" width="11" height="12" fill="url(#gr)"/>
<text class="m" x="1508" y="551">Mode</text><text class="m" x="1552" y="551">Edit</text><text class="m" x="1586" y="551">User Data</text>
<path d="M1764 546L1780 539 1777 546 1780 553Z" fill="#111"/><path d="M1783 551L1798 544" stroke="#666"/><path d="M1815 539L1822 556 1815 552 1808 556Z" fill="#111"/><use href="#mag" x="1840" y="544"/><rect x="1858" y="548" width="11" height="9" fill="none" stroke="#222"/><path d="M1860 548V543A3.500 3.500 0 0 1 1867 543" fill="none" stroke="#222"/><circle cx="1881" cy="548" r="6.500" fill="none" stroke="#222"/><circle cx="1881" cy="548" r="3" fill="none" stroke="#222"/><use href="#pl" x="1900" y="547"/>

<!-- bottom taskbar -->
<rect y="1045" width="1920" height="6" fill="#0a0a0a"/>
<rect x="49" y="1046" width="288" height="5" fill="#3a3a3a" stroke="#666"/>
<rect x="537" y="1046" width="48" height="5" fill="#2a2a2a"/>
</svg>
</body></html>
